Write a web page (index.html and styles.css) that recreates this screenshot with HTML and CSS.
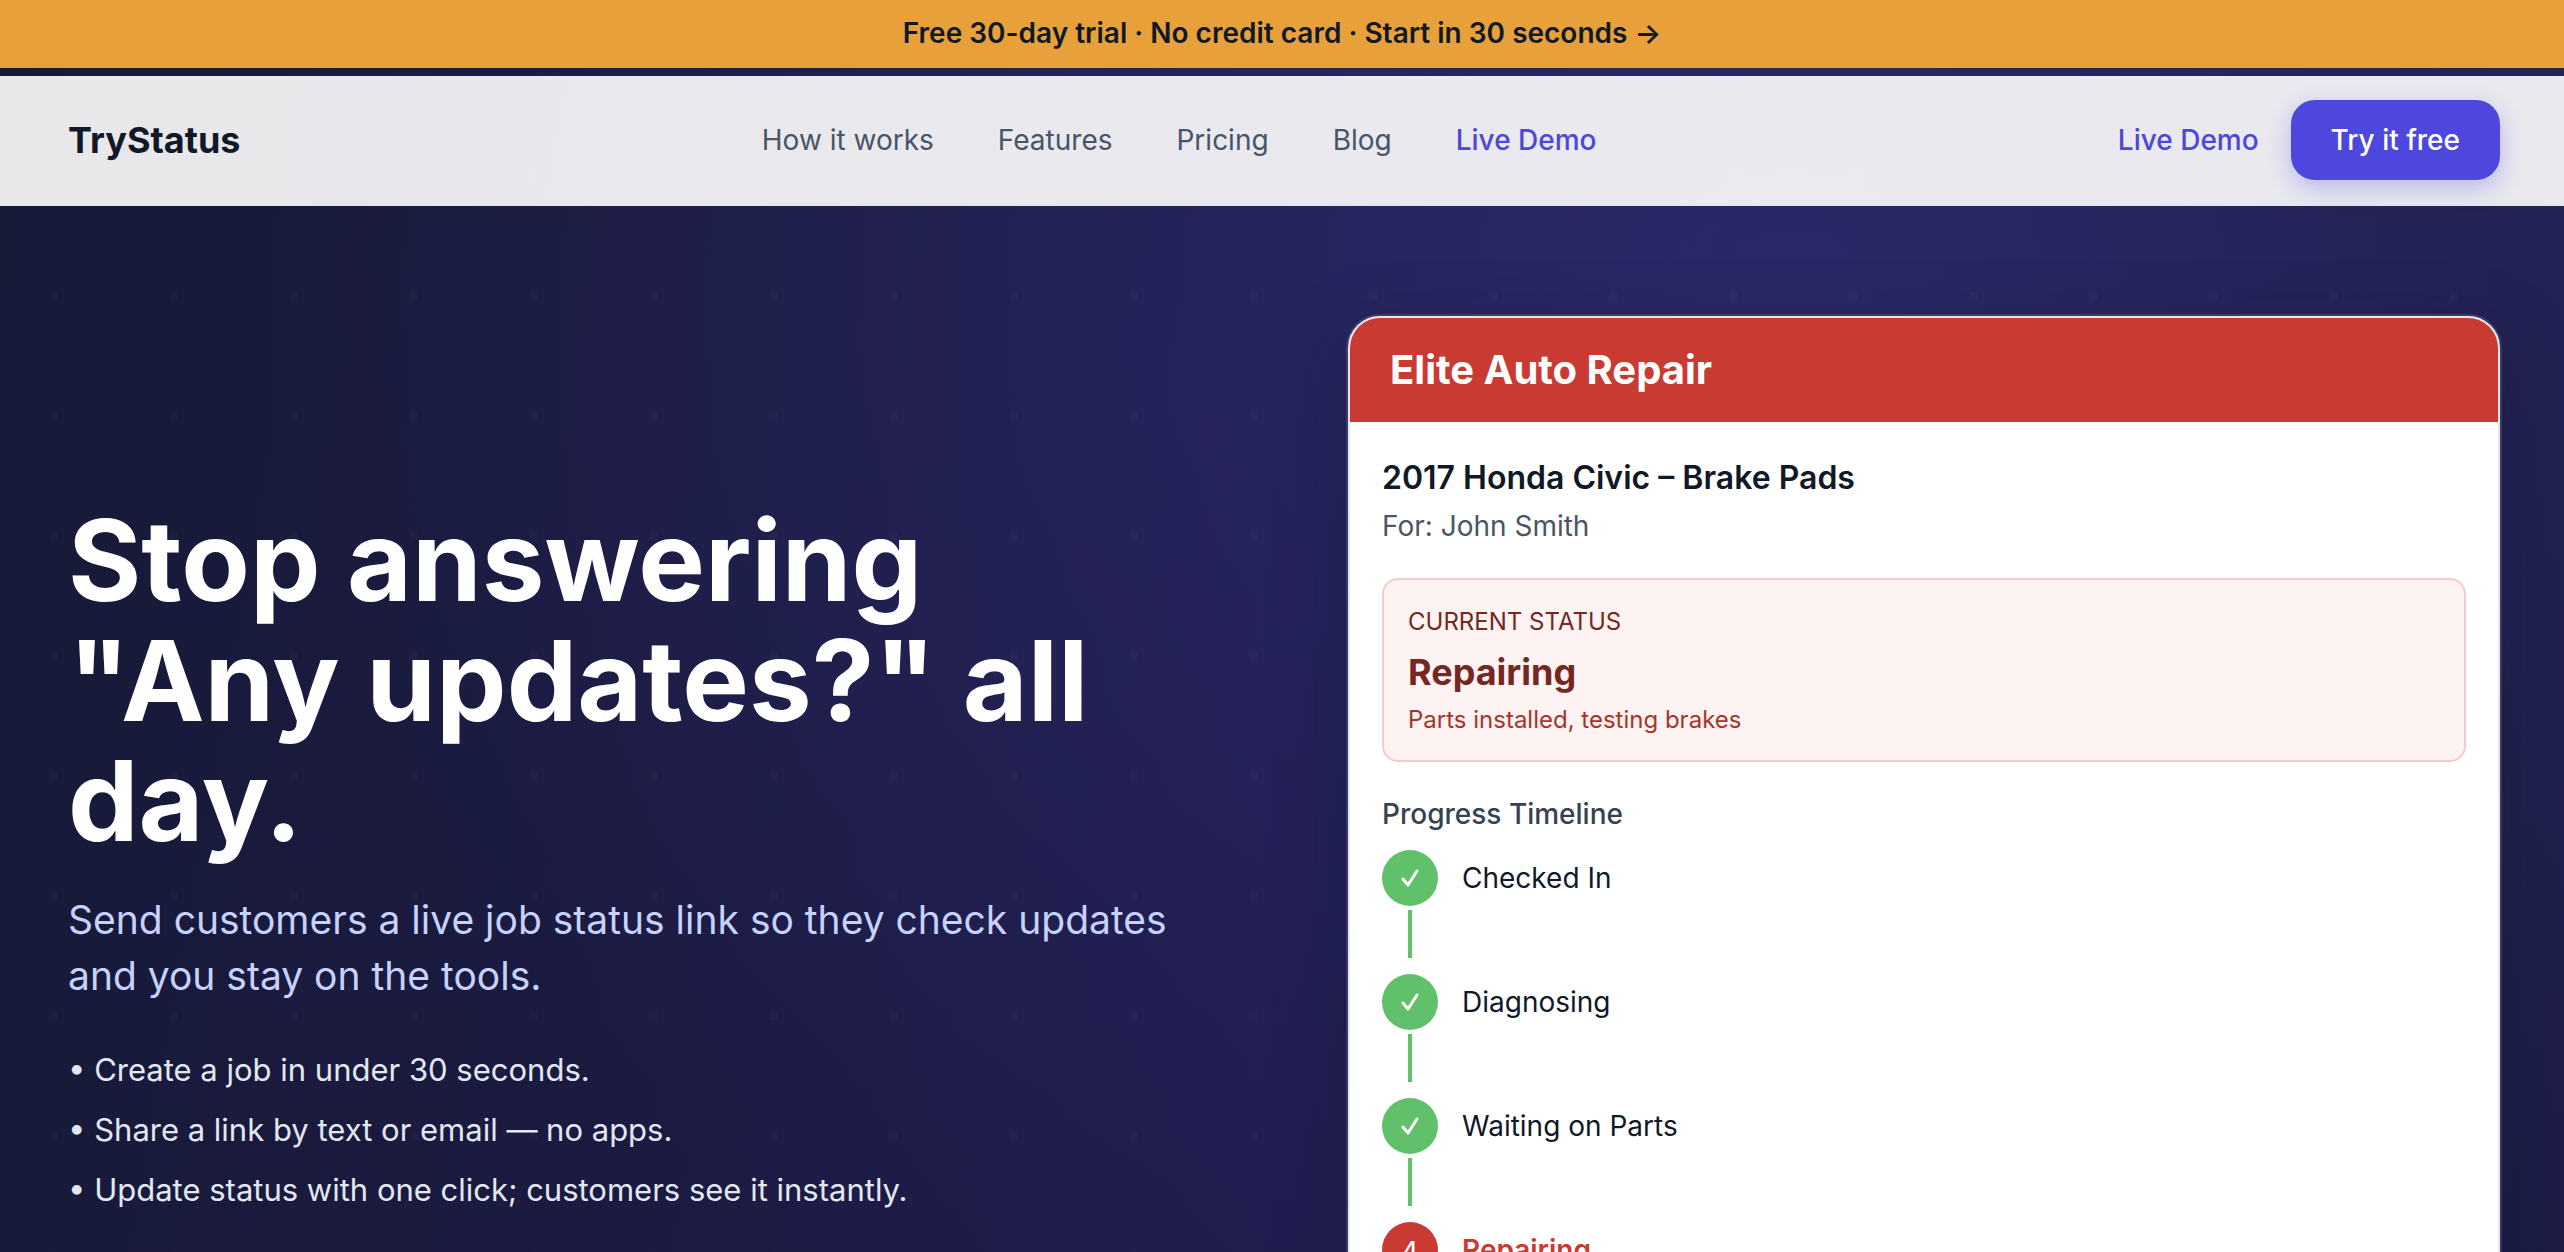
FILE: index.html
```html
<!DOCTYPE html>
<html lang="en">
<head>
  <meta charset="UTF-8" />
  <meta name="viewport" content="width=device-width, initial-scale=1.0"/>
  <title>TryStatus</title>
  <link rel="stylesheet" href="styles.css">
</head>
<body>
  <a class="promo" href="#trial">Free 30-day trial · No credit card · Start in 30 seconds →</a>

  <header class="site-header">
    <a class="logo" href="#">TryStatus</a>
    <nav class="site-nav">
      <a href="#how">How it works</a>
      <a href="#features">Features</a>
      <a href="#pricing">Pricing</a>
      <a href="#blog">Blog</a>
      <a class="accent" href="#demo">Live Demo</a>
    </nav>
    <div class="header-actions">
      <a class="accent" href="#demo">Live Demo</a>
      <button class="cta" type="button">Try it free</button>
    </div>
  </header>

  <main class="hero">
    <section class="pitch">
      <h1>Stop answering "Any updates?" all day.</h1>
      <p class="lead">Send customers a live job status link so they check updates and you stay on the tools.</p>
      <ul class="points">
        <li>• Create a job in under 30 seconds.</li>
        <li>• Share a link by text or email — no apps.</li>
        <li>• Update status with one click; customers see it instantly.</li>
      </ul>
    </section>

    <article class="card">
      <h2 class="card-header">Elite Auto Repair</h2>
      <div class="card-body">
        <h3 class="job-title">2017 Honda Civic – Brake Pads</h3>
        <p class="job-customer">For: John Smith</p>

        <div class="status-box">
          <div class="status-label">CURRENT STATUS</div>
          <div class="status-value">Repairing</div>
          <div class="status-note">Parts installed, testing brakes</div>
        </div>

        <h4 class="timeline-title">Progress Timeline</h4>
        <ol class="timeline">
          <li class="step done">
            <span class="marker"><svg viewBox="0 0 20 20"><path d="M3 11l5 6 9-14"/></svg></span>
            <span class="step-name">Checked In</span>
          </li>
          <li class="step done">
            <span class="marker"><svg viewBox="0 0 20 20"><path d="M3 11l5 6 9-14"/></svg></span>
            <span class="step-name">Diagnosing</span>
          </li>
          <li class="step done">
            <span class="marker"><svg viewBox="0 0 20 20"><path d="M3 11l5 6 9-14"/></svg></span>
            <span class="step-name">Waiting on Parts</span>
          </li>
          <li class="step current">
            <span class="marker">4</span>
            <span class="step-name">Repairing</span>
          </li>
        </ol>
      </div>
    </article>
  </main>
</body>
</html>
```
FILE: styles.css
```css
:root {
  font-family: Inter, sans-serif;
  font-size: 28px;
  --ink: #111827;
  --muted: #4b5563;
  --indigo: #4d47dd;
  --amber: #e8a13a;
  --red: #c83a32;
  --green: #60c16a;
}

* {
  box-sizing: border-box;
}

body, h1, h2, h3, h4, p, ul, ol {
  margin: 0;
  padding: 0;
}

ul, ol {
  list-style: none;
}

a {
  color: inherit;
  text-decoration: none;
}

body {
  min-height: 100vh;
  color: var(--ink);
  background:
    radial-gradient(circle, rgba(255, 255, 255, 0.025) 4px, transparent 5px) -6px -4px / 120px 120px,
    radial-gradient(ellipse 60% 90% at 70% 20%, rgba(79, 80, 190, 0.26), transparent),
    linear-gradient(100deg, #171a37, #1e1b4b 55%, #1b1b42);
}

.promo {
  display: block;
  height: 68px;
  line-height: 66px;
  background: var(--amber);
  text-align: center;
  font-weight: 600;
}

.site-header {
  display: flex;
  justify-content: space-between;
  align-items: center;
  margin-top: 8px;
  padding: 24px 64px 24px 68px;
  background: rgba(255, 255, 255, 0.9);
  border-bottom: 2px solid #e2e8f0;
}

.logo {
  font-size: 36px;
  font-weight: 700;
}

.site-nav {
  display: flex;
  gap: 64px;
  color: #475569;
}

.accent {
  color: var(--indigo);
  font-weight: 500;
}

.header-actions {
  display: flex;
  align-items: center;
  gap: 32px;
}

.cta {
  height: 80px;
  padding: 0 40px;
  border: 0;
  border-radius: 24px;
  background: var(--indigo);
  color: #fff;
  font: inherit;
  font-weight: 500;
  cursor: pointer;
  box-shadow: 0 8px 24px rgba(79, 70, 229, 0.3);
}

.hero {
  display: grid;
  grid-template-columns: 1fr 1fr;
  gap: 128px;
  padding: 110px 64px 110px 68px;
}

.pitch {
  padding-top: 184px;
  color: #fff;
}

h1 {
  font-size: 112px;
  font-weight: 700;
  line-height: 120px;
}

.lead {
  margin-top: 32px;
  font-size: 39px;
  line-height: 56px;
  color: #c7d2fe;
}

.points {
  margin-top: 36px;
  font-size: 31px;
  line-height: 60px;
  color: #e2e8f0;
}

.card {
  background: #fff;
  border: 2px solid #e5e7eb;
  border-radius: 32px;
  overflow: hidden;
  box-shadow:
    0 0 0 2px rgba(255, 255, 255, 0.12),
    0 24px 72px rgba(15, 23, 42, 0.35);
}

.card-header {
  padding: 0 40px;
  background: var(--red);
  color: #fff;
  font-size: 40px;
  font-weight: 700;
  line-height: 104px;
}

.card-body {
  padding: 32px;
}

.job-title {
  font-size: 32px;
  font-weight: 600;
  line-height: 48px;
}

.job-customer {
  color: var(--muted);
  line-height: 48px;
}

.status-box {
  margin-top: 28px;
  padding: 24px;
  border: 2px solid #f6caca;
  border-radius: 16px;
  background: #fdf3f2;
  color: #752722;
}

.status-label {
  font-size: 24px;
  line-height: 36px;
}

.status-value {
  font-size: 36px;
  font-weight: 700;
  line-height: 64px;
}

.status-note {
  font-size: 24px;
  line-height: 32px;
  color: #aa322b;
}

.timeline-title {
  margin: 32px 0 16px;
  font-size: 28px;
  font-weight: 500;
  line-height: 40px;
  color: #374151;
}

.timeline {
  display: grid;
  gap: 16px;
}

.step {
  display: grid;
  grid-template-columns: 56px 1fr;
  column-gap: 24px;
  row-gap: 4px;
  align-items: center;
}

/* connector below each finished step */
.step.done::after {
  content: "";
  justify-self: center;
  width: 4px;
  height: 48px;
  background: var(--green);
}

.marker {
  display: flex;
  align-items: center;
  justify-content: center;
  height: 56px;
  border-radius: 50%;
  background: var(--green);
  color: #fff;
  font-size: 24px;
  font-weight: 500;
}

.marker svg {
  width: 20px;
  height: 20px;
  fill: none;
  stroke: #fff;
  stroke-width: 3;
  stroke-linecap: round;
  stroke-linejoin: round;
}

.step.current .marker {
  background: var(--red);
}

.step.current .step-name {
  color: var(--red);
  font-weight: 600;
}
```
